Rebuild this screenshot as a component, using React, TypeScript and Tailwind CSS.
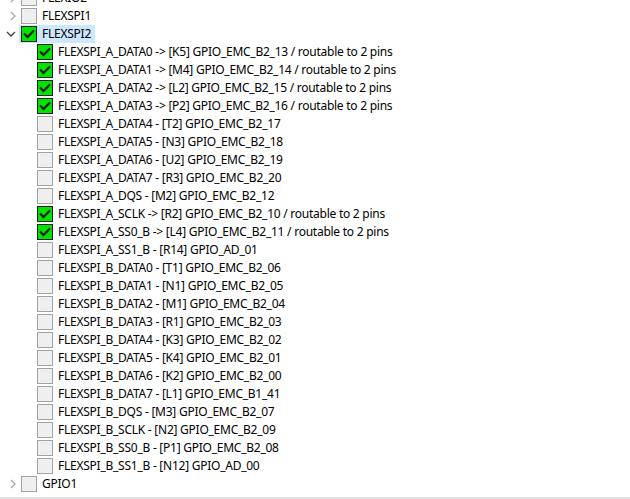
import React from 'react'

type Item = { label: string; checked?: boolean }

const CHILDREN: Item[] = [
  { label: 'FLEXSPI_A_DATA0 -> [K5] GPIO_EMC_B2_13 / routable to 2 pins', checked: true },
  { label: 'FLEXSPI_A_DATA1 -> [M4] GPIO_EMC_B2_14 / routable to 2 pins', checked: true },
  { label: 'FLEXSPI_A_DATA2 -> [L2] GPIO_EMC_B2_15 / routable to 2 pins', checked: true },
  { label: 'FLEXSPI_A_DATA3 -> [P2] GPIO_EMC_B2_16 / routable to 2 pins', checked: true },
  { label: 'FLEXSPI_A_DATA4 - [T2] GPIO_EMC_B2_17' },
  { label: 'FLEXSPI_A_DATA5 - [N3] GPIO_EMC_B2_18' },
  { label: 'FLEXSPI_A_DATA6 - [U2] GPIO_EMC_B2_19' },
  { label: 'FLEXSPI_A_DATA7 - [R3] GPIO_EMC_B2_20' },
  { label: 'FLEXSPI_A_DQS - [M2] GPIO_EMC_B2_12' },
  { label: 'FLEXSPI_A_SCLK -> [R2] GPIO_EMC_B2_10 / routable to 2 pins', checked: true },
  { label: 'FLEXSPI_A_SS0_B -> [L4] GPIO_EMC_B2_11 / routable to 2 pins', checked: true },
  { label: 'FLEXSPI_A_SS1_B - [R14] GPIO_AD_01' },
  { label: 'FLEXSPI_B_DATA0 - [T1] GPIO_EMC_B2_06' },
  { label: 'FLEXSPI_B_DATA1 - [N1] GPIO_EMC_B2_05' },
  { label: 'FLEXSPI_B_DATA2 - [M1] GPIO_EMC_B2_04' },
  { label: 'FLEXSPI_B_DATA3 - [R1] GPIO_EMC_B2_03' },
  { label: 'FLEXSPI_B_DATA4 - [K3] GPIO_EMC_B2_02' },
  { label: 'FLEXSPI_B_DATA5 - [K4] GPIO_EMC_B2_01' },
  { label: 'FLEXSPI_B_DATA6 - [K2] GPIO_EMC_B2_00' },
  { label: 'FLEXSPI_B_DATA7 - [L1] GPIO_EMC_B1_41' },
  { label: 'FLEXSPI_B_DQS - [M3] GPIO_EMC_B2_07' },
  { label: 'FLEXSPI_B_SCLK - [N2] GPIO_EMC_B2_09' },
  { label: 'FLEXSPI_B_SS0_B - [P1] GPIO_EMC_B2_08' },
  { label: 'FLEXSPI_B_SS1_B - [N12] GPIO_AD_00' },
]

function Box({ checked }: { checked?: boolean }) {
  if (checked) {
    return (
      <span className="w-4 h-4 shrink-0 border border-[#1c1c1c] bg-[#00e400] flex items-center justify-center">
        <svg width="14" height="14" viewBox="0 0 14 14">
          <polyline points="2,6.5 5.5,10 12,3.5" fill="none" stroke="#1a1a1a" strokeWidth="2.2" />
        </svg>
      </span>
    )
  }
  return <span className="w-4 h-4 shrink-0 border border-[#a3a3a3] bg-[#efefef]" />
}

function Chevron({ open }: { open?: boolean }) {
  return (
    <span className="w-[19px] h-[18px] shrink-0 flex items-center justify-center">
      {open ? (
        <svg width="10" height="6" viewBox="0 0 10 6" className="ml-[3px]">
          <polyline points="1,1 5,5 9,1" fill="none" stroke="#404040" strokeWidth="1.3" />
        </svg>
      ) : (
        <svg width="6" height="10" viewBox="0 0 6 10" className="ml-[6px]">
          <polyline points="1,1 5,5 1,9" fill="none" stroke="#a6a6a6" strokeWidth="1.3" />
        </svg>
      )}
    </span>
  )
}

function TopRow({ label, open, checked, selected }: { label: string; open?: boolean; checked?: boolean; selected?: boolean }) {
  return (
    <div className="h-[18px] flex items-center">
      <Chevron open={open} />
      <div className={`h-[18px] flex items-center pl-[2px] pr-[4px] ${selected ? 'bg-[#cce8ff]' : ''}`}>
        <Box checked={checked} />
        <span className="ml-[5px] whitespace-nowrap">{label}</span>
      </div>
    </div>
  )
}

export default function App() {
  return (
    <div className="w-[630px] h-[499px] bg-white overflow-hidden text-[12px] leading-[18px] tracking-[-0.25px] text-black" style={{ fontFamily: '"Noto Sans", "Open Sans", sans-serif' }}>
      <div className="h-[497px] overflow-hidden">
        <div className="-mt-[11px]">
          <TopRow label="FLEXIO2" />
          <TopRow label="FLEXSPI1" />
          <TopRow label="FLEXSPI2" open checked selected />
          {CHILDREN.map(c => (
            <div key={c.label} className="h-[18px] flex items-center pl-[37px]">
              <Box checked={c.checked} />
              <span className="ml-[5px] whitespace-nowrap">{c.label}</span>
            </div>
          ))}
          <TopRow label="GPIO1" />
        </div>
      </div>
      <div className="h-[2px] bg-[#e3e3e3]" />
    </div>
  )
}
